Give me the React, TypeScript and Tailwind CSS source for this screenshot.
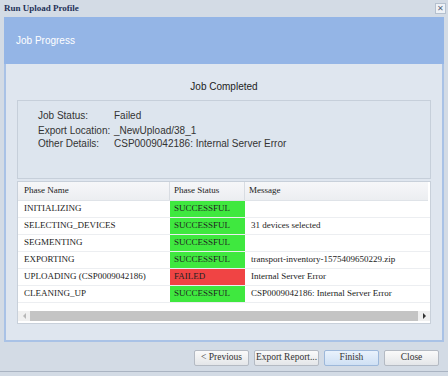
import React from "react";

const rows = [
  { name: "INITIALIZING", status: "SUCCESSFUL", msg: "" },
  { name: "SELECTING_DEVICES", status: "SUCCESSFUL", msg: "31 devices selected" },
  { name: "SEGMENTING", status: "SUCCESSFUL", msg: "" },
  { name: "EXPORTING", status: "SUCCESSFUL", msg: "transport-inventory-1575409650229.zip" },
  { name: "UPLOADING (CSP0009042186)", status: "FAILED", msg: "Internal Server Error" },
  { name: "CLEANING_UP", status: "SUCCESSFUL", msg: "CSP0009042186: Internal Server Error" },
];

const serif = { fontFamily: '"Liberation Serif", "Times New Roman", serif' };
const sans = { fontFamily: '"Liberation Sans", Arial, sans-serif' };

function Btn({ label, primary, w }: { label: string; primary?: boolean; w: string }) {
  return (
    <button
      style={serif}
      className={
        w +
        " h-[16px] whitespace-nowrap rounded-[2px] border text-[9.5px] leading-none text-[#333] " +
        (primary
          ? "border-[#9db8da] bg-gradient-to-b from-[#e9f2fc] to-[#cfe0f4]"
          : "border-[#b4bac3] bg-gradient-to-b from-[#fafafa] to-[#e4e6e9]")
      }
    >
      {label}
    </button>
  );
}

export default function App() {
  return (
    <div className="relative h-[376px] w-[448px] overflow-hidden bg-[#d3dbe5]">
      {/* title bar */}
      <div className="flex h-[17px] items-center justify-between pl-[4px] pr-[2px]">
        <span style={serif} className="text-[9px] font-bold text-[#1f3158]">
          Run Upload Profile
        </span>
        <span
          style={sans}
          className="flex h-[11px] w-[11px] items-center justify-center border border-[#b5c0ce] bg-[#eef2f7] text-[8px] leading-none text-[#55657a]"
        >
          ✕
        </span>
      </div>

      <div className="mx-[4px] flex flex-col">
        {/* header */}
        <div className="flex h-[47px] items-center bg-[#94b5e6] pl-[12px]">
          <span style={sans} className="text-[10px] text-white">
            Job Progress
          </span>
        </div>

        {/* content */}
        <div className="flex h-[278px] flex-col border-x-2 border-b-2 border-[#a9c2e6] bg-[#dfe6ef] px-[11px] pt-[17px]">
          <div style={sans} className="text-center text-[10px] leading-[12px] text-[#222]">
            Job Completed
          </div>

          <div
            style={sans}
            className="mt-[7px] h-[79px] border border-[#c6cfda] bg-[#dde5ee] pl-[20px] pt-[8px] text-[10px] leading-[13px] text-[#333]"
          >
            <div className="flex">
              <span className="w-[76px]">Job Status:</span>
              <span>Failed</span>
            </div>
            <div className="mt-[2px] flex">
              <span className="w-[76px]">Export Location:</span>
              <span>_NewUpload/38_1</span>
            </div>
            <div className="flex">
              <span className="w-[76px]">Other Details:</span>
              <span>CSP0009042186: Internal Server Error</span>
            </div>
          </div>

          {/* table */}
          <div className="mt-[2px] flex h-[143px] flex-col border border-[#c8d0da] bg-white">
            <div style={serif} className="text-[9px] text-[#222]">
              <div className="mr-[2px] flex h-[19px] border-b border-[#dfe3e8] bg-gradient-to-b from-[#f6f7f9] to-[#eceef1]">
                <div className="flex w-[152px] items-center border-r border-[#d8dce2] pl-[6px]">Phase Name</div>
                <div className="flex w-[75px] items-center border-r border-[#d8dce2] pl-[4px]">Phase Status</div>
                <div className="flex flex-1 items-center pl-[4px]">Message</div>
              </div>
              {rows.map((r) => (
                <div key={r.name} className="flex h-[17px] border-b border-[#eceef1]">
                  <div className="flex w-[152px] items-center pl-[6px]">{r.name}</div>
                  <div
                    className={
                      "flex w-[75px] items-center pl-[4px] " +
                      (r.status === "FAILED" ? "bg-[#f04444]" : "bg-[#3fe83f]")
                    }
                  >
                    {r.status}
                  </div>
                  <div className="flex flex-1 items-center pl-[6px]">{r.msg}</div>
                </div>
              ))}
            </div>
            <div className="flex-1" />
            {/* scrollbar */}
            <div className="mb-[2px] flex h-[10px] items-center bg-[#f0f0f0]">
              <div className="flex w-[12px] items-center justify-center">
                <span className="h-0 w-0 border-y-[3px] border-r-[3px] border-y-transparent border-r-[#b8b8b8]" />
              </div>
              <div className="h-[10px] flex-1 bg-[#c4c4c4]" />
              <div className="flex w-[12px] items-center justify-center">
                <span className="h-0 w-0 border-y-[3px] border-l-[3px] border-y-transparent border-l-[#333]" />
              </div>
            </div>
          </div>
        </div>
      </div>

      {/* footer */}
      <div className="flex justify-end gap-[5px] pr-[9px] pt-[8px]">
        <Btn label="< Previous" w="w-[55px]" />
        <Btn label="Export Report..." w="w-[65px]" />
        <Btn label="Finish" primary w="w-[55px]" />
        <Btn label="Close" w="w-[55px]" />
      </div>
      <div className="absolute bottom-[4px] left-0 h-px w-full bg-[#aab4c2]" />
    </div>
  );
}
